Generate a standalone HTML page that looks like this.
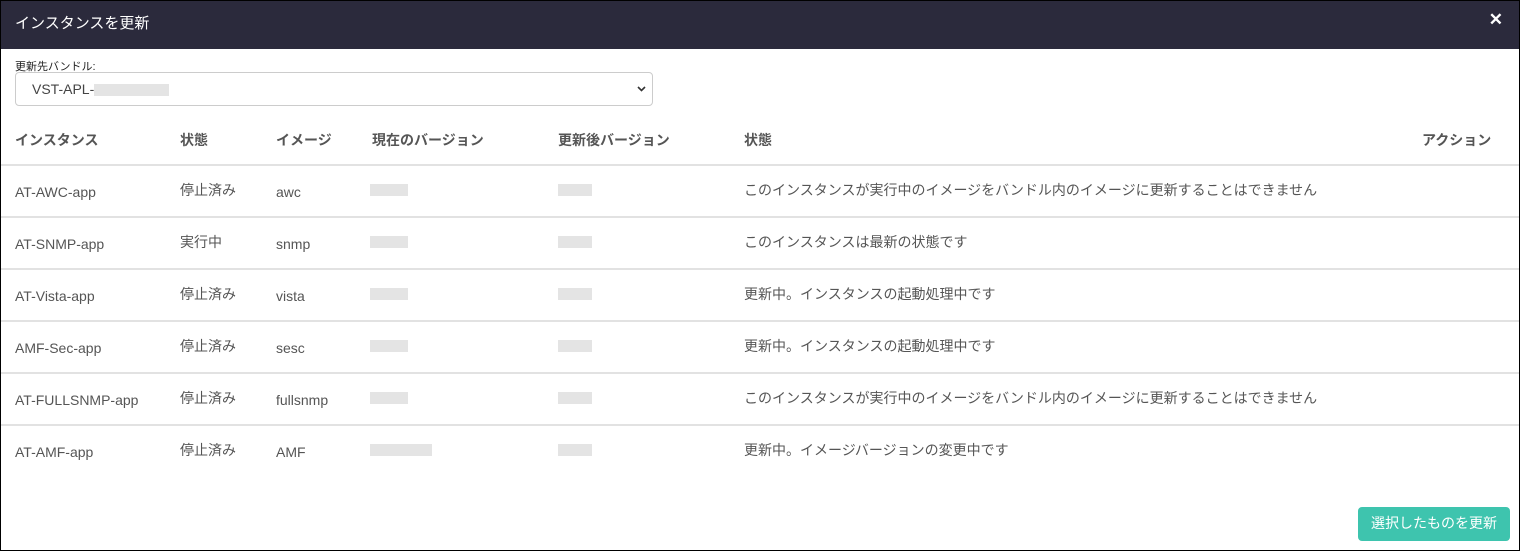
<!DOCTYPE html><html><head><meta charset="utf-8"><style>
*{margin:0;padding:0;box-sizing:border-box}
body{width:1520px;height:551px;overflow:hidden;background:#fff;font-family:"Liberation Sans","Noto Sans CJK JP",sans-serif;color:#555;font-size:14px;position:relative}
.frame{position:absolute;left:0;top:0;width:1520px;height:551px;border:1px solid #000}
.hd{position:absolute;left:1px;top:1px;width:1518px;height:48px;background:#2b2a3c;color:#fff;font-size:15px;line-height:46px;padding-left:14px}
.x{position:absolute;right:16px;top:0;font-size:17px;font-weight:bold;line-height:38px}
.lbl{position:absolute;left:15px;top:58px;font-size:11px;color:#222}
.sel{position:absolute;left:15px;top:72px;width:638px;height:34px;border:1px solid #ccc;border-radius:4px;color:#444;font-size:14px;line-height:32px;padding-left:16px}
.blur{display:inline-block;background:#e4e4e4;height:12px;vertical-align:middle}
.th{position:absolute;top:130px;font-weight:bold;color:#555;font-size:14px}
.line{position:absolute;left:1px;width:1518px;height:2px;background:#e2e2e2}
.c{position:absolute;font-size:14px;color:#555;line-height:20px}
.btn{position:absolute;left:1358px;top:507px;width:152px;height:34px;background:#3ec4ae;border-radius:4px;color:#fff;font-size:14px;text-align:center;line-height:33px}
</style></head><body>
<div class="frame"></div>
<div class="hd">インスタンスを更新<span class="x">✕</span></div>
<div class="lbl">更新先バンドル:</div>
<div class="sel">VST-APL-<span class="blur" style="width:75px"></span><svg style="position:absolute;right:6px;top:13px" width="9" height="6" viewBox="0 0 9 6"><path d="M1 1l3.5 3.5L8 1" stroke="#333" stroke-width="1.6" fill="none"/></svg></div>
<div class="th" style="left:15px">インスタンス</div>
<div class="th" style="left:180px">状態</div>
<div class="th" style="left:276px">イメージ</div>
<div class="th" style="left:372px">現在のバージョン</div>
<div class="th" style="left:558px">更新後バージョン</div>
<div class="th" style="left:744px">状態</div>
<div class="th" style="left:1422px">アクション</div>
<div class="line" style="top:164px"></div>
<div class="line" style="top:216px"></div>
<div class="line" style="top:268px"></div>
<div class="line" style="top:320px"></div>
<div class="line" style="top:372px"></div>
<div class="line" style="top:424px"></div>

<div class="c" style="left:15px;top:182px">AT-AWC-app</div><div class="c" style="left:180px;top:180px">停止済み</div><div class="c" style="left:276px;top:182px">awc</div>
<span class="blur" style="position:absolute;left:370px;top:184px;width:38px"></span><span class="blur" style="position:absolute;left:558px;top:184px;width:34px"></span>
<div class="c" style="left:744px;top:180px">このインスタンスが実行中のイメージをバンドル内のイメージに更新することはできません</div>

<div class="c" style="left:15px;top:234px">AT-SNMP-app</div><div class="c" style="left:180px;top:232px">実行中</div><div class="c" style="left:276px;top:234px">snmp</div>
<span class="blur" style="position:absolute;left:370px;top:236px;width:38px"></span><span class="blur" style="position:absolute;left:558px;top:236px;width:34px"></span>
<div class="c" style="left:744px;top:232px">このインスタンスは最新の状態です</div>

<div class="c" style="left:15px;top:286px">AT-Vista-app</div><div class="c" style="left:180px;top:284px">停止済み</div><div class="c" style="left:276px;top:286px">vista</div>
<span class="blur" style="position:absolute;left:370px;top:288px;width:38px"></span><span class="blur" style="position:absolute;left:558px;top:288px;width:34px"></span>
<div class="c" style="left:744px;top:284px">更新中。インスタンスの起動処理中です</div>

<div class="c" style="left:15px;top:338px">AMF-Sec-app</div><div class="c" style="left:180px;top:336px">停止済み</div><div class="c" style="left:276px;top:338px">sesc</div>
<span class="blur" style="position:absolute;left:370px;top:340px;width:38px"></span><span class="blur" style="position:absolute;left:558px;top:340px;width:34px"></span>
<div class="c" style="left:744px;top:336px">更新中。インスタンスの起動処理中です</div>

<div class="c" style="left:15px;top:390px">AT-FULLSNMP-app</div><div class="c" style="left:180px;top:388px">停止済み</div><div class="c" style="left:276px;top:390px">fullsnmp</div>
<span class="blur" style="position:absolute;left:370px;top:392px;width:38px"></span><span class="blur" style="position:absolute;left:558px;top:392px;width:34px"></span>
<div class="c" style="left:744px;top:388px">このインスタンスが実行中のイメージをバンドル内のイメージに更新することはできません</div>

<div class="c" style="left:15px;top:442px">AT-AMF-app</div><div class="c" style="left:180px;top:440px">停止済み</div><div class="c" style="left:276px;top:442px">AMF</div>
<span class="blur" style="position:absolute;left:370px;top:444px;width:62px"></span><span class="blur" style="position:absolute;left:558px;top:444px;width:34px"></span>
<div class="c" style="left:744px;top:440px">更新中。イメージバージョンの変更中です</div>

<div class="btn">選択したものを更新</div>
</body></html>
